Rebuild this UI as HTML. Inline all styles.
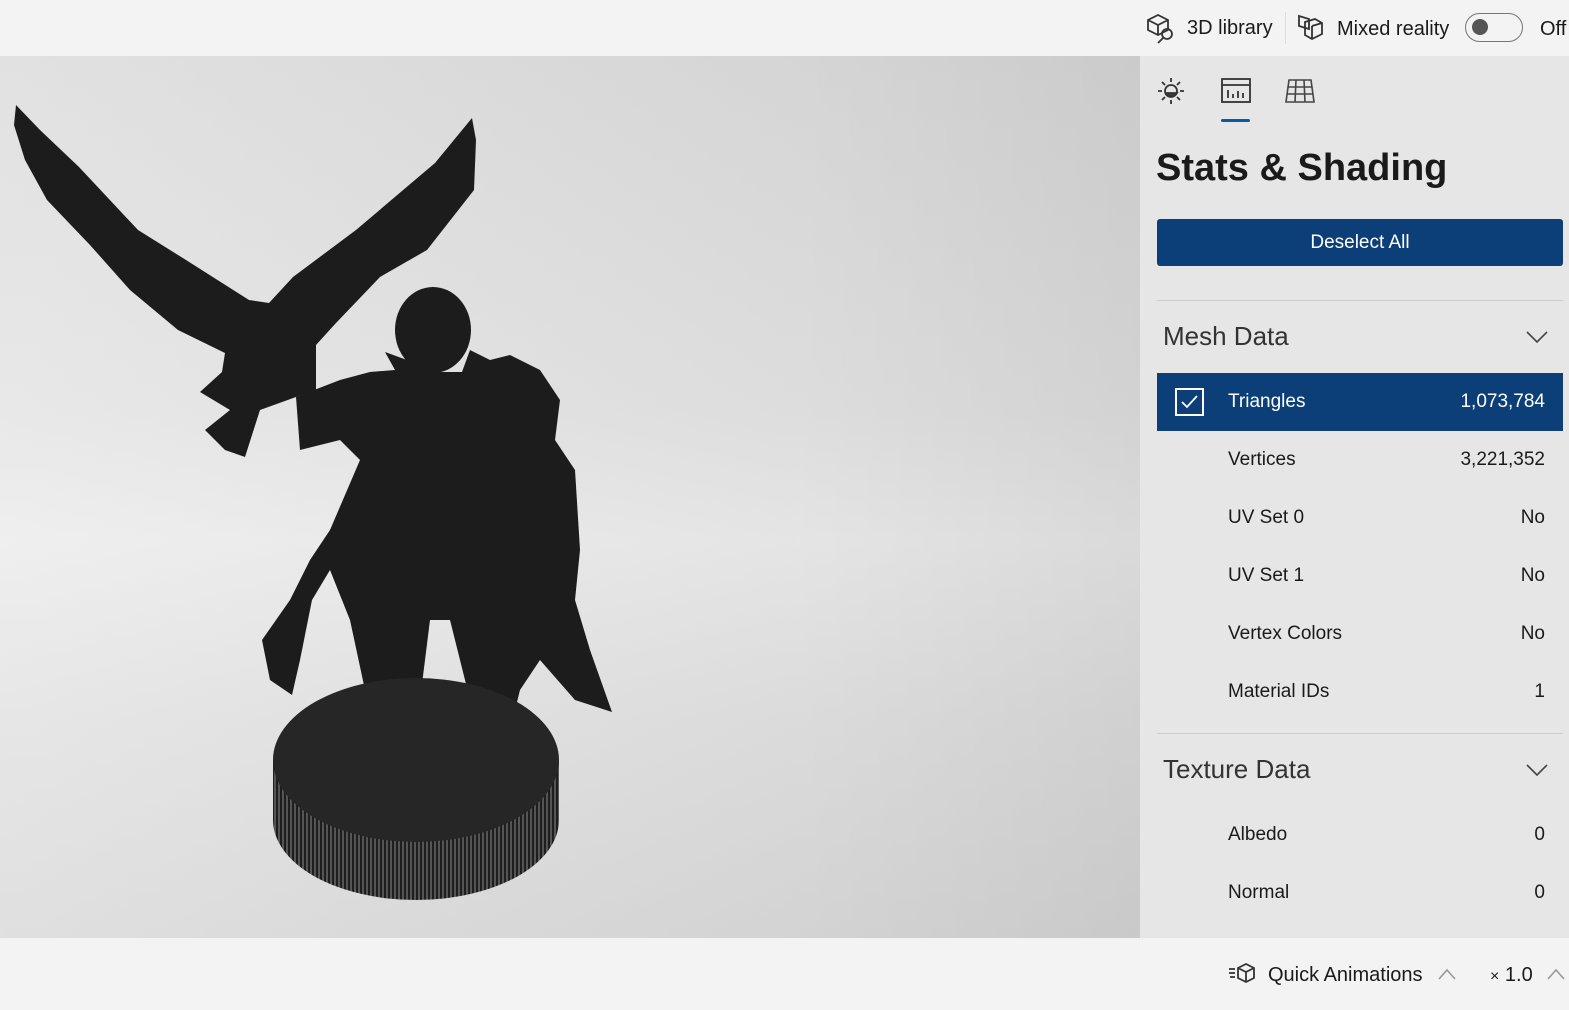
<!DOCTYPE html>
<html><head><meta charset="utf-8"><style>
*{margin:0;padding:0;box-sizing:border-box}
body{width:1569px;height:1010px;overflow:hidden;background:#f3f3f3;font-family:"Liberation Sans",sans-serif;color:#1a1a1a;position:relative}
.top{position:absolute;left:0;top:0;width:1569px;height:56px;background:#f3f3f3}
.vp{position:absolute;left:0;top:56px;width:1140px;height:882px;background:linear-gradient(180deg,#dcdcdc 0%,#e4e4e4 40%,#ececec 55%,#e2e2e2 75%,#dadada 100%)}
.vp:after{content:"";position:absolute;inset:0;background:linear-gradient(90deg,rgba(255,255,255,0.15),rgba(0,0,0,0.03) 70%,rgba(0,0,0,0.08))}
.panel{position:absolute;left:1140px;top:56px;width:429px;height:882px;background:#e6e6e6}
.bot{position:absolute;left:0;top:938px;width:1569px;height:72px;background:#f3f3f3}
.t{position:absolute;white-space:nowrap}
.row{position:absolute;left:1157px;width:406px;height:58px;font-size:19px}
.row .l{position:absolute;left:71px;top:18px}
.row .v{position:absolute;right:18px;top:18px}
.hr{position:absolute;left:1157px;width:406px;height:1px;background:#cfcfcf}
</style></head><body>
<div class="top"></div>
<svg class="t" style="left:1145px;top:12px" width="34" height="32" viewBox="0 0 34 32" fill="none" stroke="#333" stroke-width="1.8"><path d="M3 8l10-5 10 5v10l-10 5-10-5z M3 8l10 5 10-5 M13 13v10"/><circle cx="22" cy="22" r="5"/><path d="M18 26l-5 5"/></svg>
<div class="t" style="left:1187px;top:17px;font-size:20px">3D library</div>
<div class="t" style="left:1285px;top:12px;width:1px;height:32px;background:#ddd"></div>
<svg class="t" style="left:1296px;top:12px" width="32" height="32" viewBox="0 0 32 32" fill="none" stroke="#333" stroke-width="1.8"><path d="M3 4l10 3v10L3 14z M9 10l10-3 7 4v11l-10 5-7-4z M16 14l10-3 M16 14v13"/></svg>
<div class="t" style="left:1337px;top:18px;font-size:20px">Mixed reality</div>
<div class="t" style="left:1465px;top:13px;width:58px;height:29px;border:1.5px solid #777;border-radius:15px"><div style="position:absolute;left:6px;top:5px;width:16px;height:16px;border-radius:50%;background:#555"></div></div>
<div class="t" style="left:1540px;top:18px;font-size:20px">Off</div>

<div class="vp"></div>
<svg class="t" style="left:0;top:0" width="1140" height="938" viewBox="0 0 1140 938">
<defs><pattern id="st" width="4" height="10" patternUnits="userSpaceOnUse"><rect width="4" height="10" fill="#555"/><rect width="2" height="10" fill="#1e1e1e"/></pattern></defs>
<g fill="#1c1c1c">
<path d="M16 105L40 130L79 167L138 230L186 260L249 300L269 303L293 277L356 230L435 163L472 118L476 140L474 190L427 250L380 277L336 323L316 345L316 390L296 397L260 410L245 457L225 450L205 430L230 410L200 392L222 372L225 353L178 330L130 290L90 245L47 200L25 160L14 125Z"/>
<ellipse cx="433" cy="330" rx="38" ry="43"/>
<path d="M385 352L395 370L370 372L340 380L296 397L300 450L340 440L360 460L330 530L310 560L290 600L262 640L270 680L292 695L300 660L312 600L330 570L350 620L365 690L380 720L400 740L420 700L430 620L450 620L470 700L485 740L510 730L520 690L540 660L575 700L612 712L590 650L575 600L580 550L575 470L555 440L560 400L540 370L510 355L490 360L470 350L462 372L440 372Z"/>
<ellipse cx="416" cy="820" rx="143" ry="80" fill="url(#st)"/>
<rect x="273" y="760" width="286" height="60" fill="url(#st)"/>
<ellipse cx="416" cy="760" rx="143" ry="82" fill="#262626"/>
</g>
</svg>

<div class="panel"></div>
<svg class="t" style="left:1155px;top:75px" width="32" height="32" viewBox="0 0 32 32" fill="none" stroke="#333" stroke-width="1.8"><circle cx="16" cy="16" r="6"/><path d="M16 3v4M16 25v4M3 16h4M25 16h4M7 7l3 3M22 22l3 3M7 25l3-3M22 10l3-3"/><path d="M12 18a6 6 0 0 0 10 0z" fill="#444"/></svg>
<svg class="t" style="left:1220px;top:77px" width="32" height="28" viewBox="0 0 32 28" fill="none" stroke="#333" stroke-width="1.8"><rect x="2" y="2" width="28" height="23"/><path d="M2 8h28M8 21v-8M13 21v-4M18 21v-7M23 21v-5"/></svg>
<div class="t" style="left:1221px;top:119px;width:29px;height:3px;background:#0a5aa0;border-radius:2px"></div>
<svg class="t" style="left:1284px;top:78px" width="32" height="26" viewBox="0 0 32 26" fill="none" stroke="#444" stroke-width="1.6"><path d="M5 2h22l3 22H2z M4 9h24M3 16h26M12 2l-1 22M20 2l1 22"/></svg>

<div class="t" style="left:1156px;top:147px;font-size:38px;font-weight:bold;color:#1a1a1a">Stats &amp; Shading</div>
<div class="t" style="left:1157px;top:219px;width:406px;height:47px;background:#0c3f78;border-radius:3px;color:#fff;font-size:19px;text-align:center;line-height:47px">Deselect All</div>
<div class="hr" style="top:300px"></div>
<div class="t" style="left:1163px;top:321px;font-size:26px;color:#333">Mesh Data</div>
<svg class="t" style="left:1526px;top:330px" width="22" height="14" viewBox="0 0 22 14" fill="none" stroke="#444" stroke-width="1.6"><path d="M1 2l10 10 10-10"/></svg>
<div class="row" style="top:373px;background:#0c3f78;color:#fff"><div style="position:absolute;left:18px;top:15px;width:29px;height:28px;border:2px solid #fff"><svg width="25" height="24" viewBox="0 0 25 24" fill="none" stroke="#fff" stroke-width="1.8" style="position:absolute;left:0;top:0"><path d="M5 12l5 5 10-11"/></svg></div><span class="l">Triangles</span><span class="v">1,073,784</span></div>
<div class="row" style="top:431px"><span class="l">Vertices</span><span class="v">3,221,352</span></div>
<div class="row" style="top:489px"><span class="l">UV Set 0</span><span class="v">No</span></div>
<div class="row" style="top:547px"><span class="l">UV Set 1</span><span class="v">No</span></div>
<div class="row" style="top:605px"><span class="l">Vertex Colors</span><span class="v">No</span></div>
<div class="row" style="top:663px"><span class="l">Material IDs</span><span class="v">1</span></div>
<div class="hr" style="top:733px"></div>
<div class="t" style="left:1163px;top:754px;font-size:26px;color:#333">Texture Data</div>
<svg class="t" style="left:1526px;top:763px" width="22" height="14" viewBox="0 0 22 14" fill="none" stroke="#444" stroke-width="1.6"><path d="M1 2l10 10 10-10"/></svg>
<div class="row" style="top:806px"><span class="l">Albedo</span><span class="v">0</span></div>
<div class="row" style="top:864px"><span class="l">Normal</span><span class="v">0</span></div>

<div class="bot"></div>
<svg class="t" style="left:1228px;top:962px" width="30" height="24" viewBox="0 0 30 24" fill="none" stroke="#333" stroke-width="1.8"><path d="M1 7h6M1 11h6M2 15h5"/><path d="M10 6l8-4 8 4v10l-8 4-8-4z M10 6l8 4 8-4 M18 10v10"/></svg>
<div class="t" style="left:1268px;top:964px;font-size:20px">Quick Animations</div>
<svg class="t" style="left:1438px;top:968px" width="18" height="12" viewBox="0 0 18 12" fill="none" stroke="#999" stroke-width="1.6"><path d="M1 11l8-9 8 9"/></svg>
<div class="t" style="left:1490px;top:964px;font-size:20px"><span style="font-size:16px">×</span> 1.0</div>
<svg class="t" style="left:1547px;top:968px" width="18" height="12" viewBox="0 0 18 12" fill="none" stroke="#999" stroke-width="1.6"><path d="M1 11l8-9 8 9"/></svg>
</body></html>
